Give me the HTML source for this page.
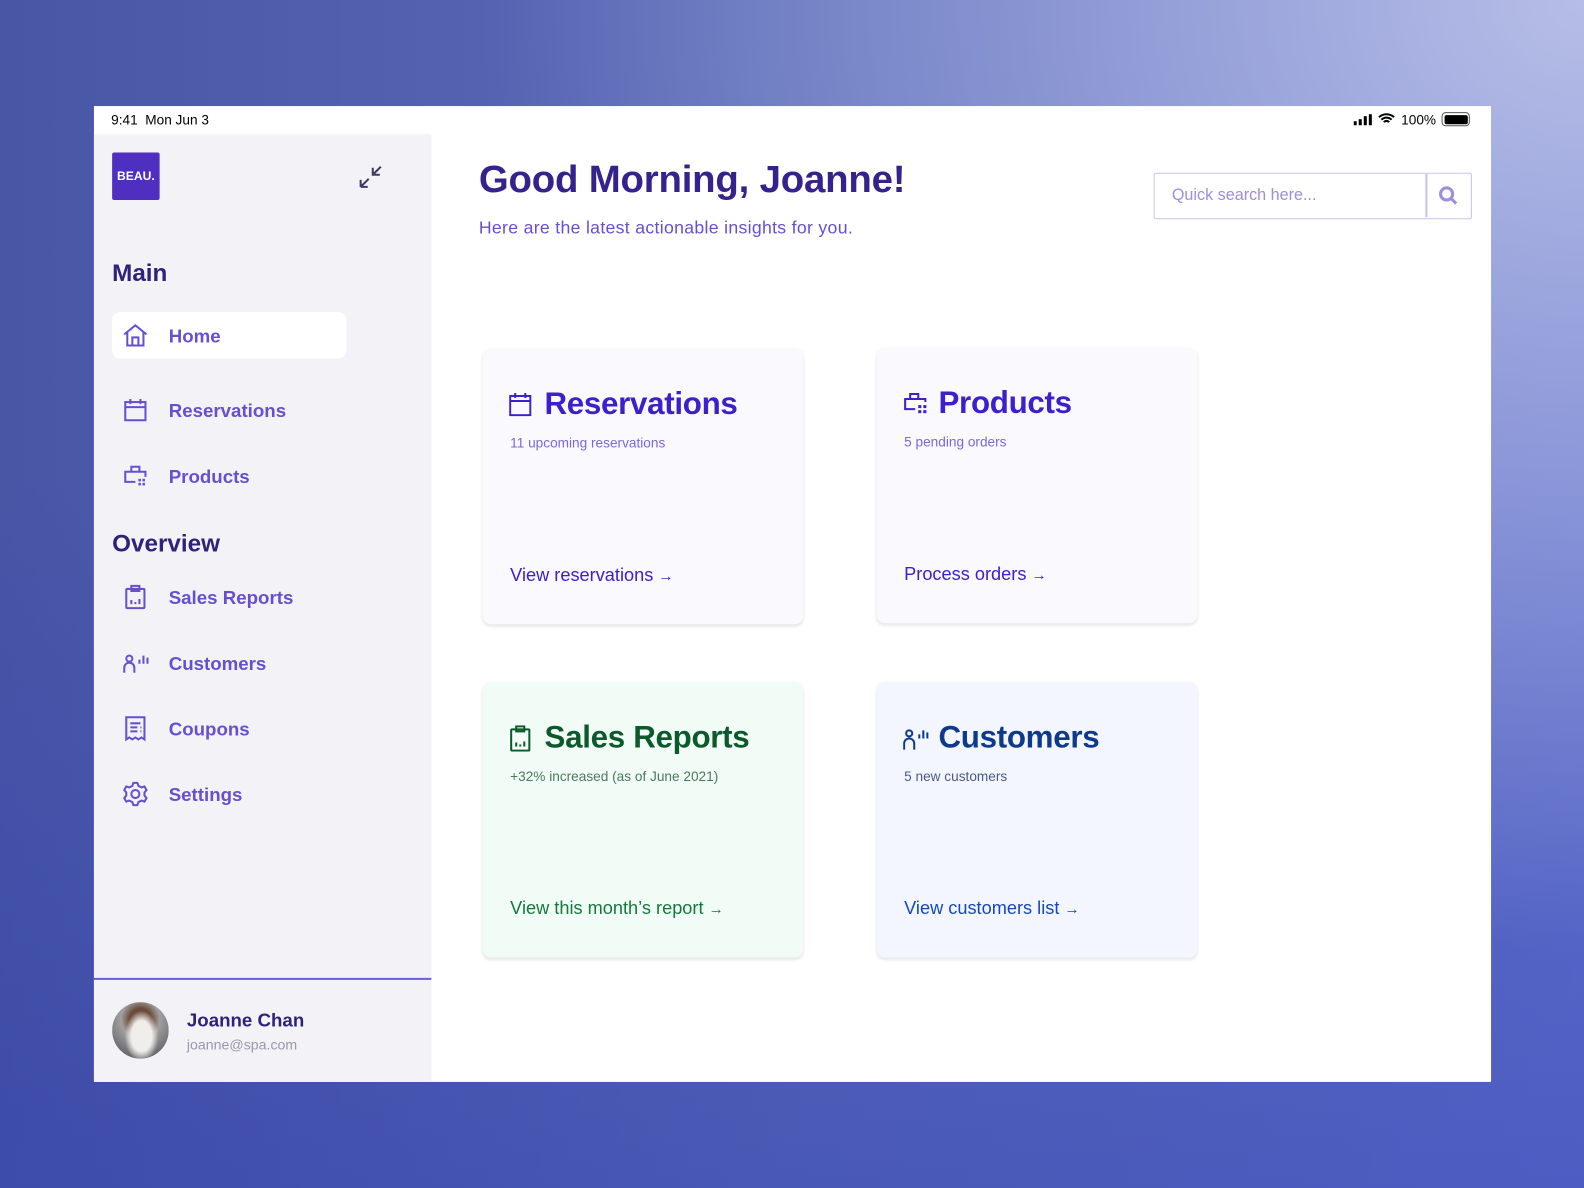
<!DOCTYPE html>
<html><head><meta charset="utf-8">
<style>
*{margin:0;padding:0;box-sizing:border-box}
html,body{width:1584px;height:1188px;overflow:hidden}
body{font-family:"Liberation Sans",sans-serif;background:#5060b0;position:relative}
#root{position:absolute;left:0;top:0;width:1568px;height:1176px;transform:scale(1.0102);transform-origin:0 0;background:radial-gradient(ellipse 70% 80% at 100% 0%,rgba(182,190,230,1) 0%,rgba(182,190,230,0) 100%),linear-gradient(to bottom,rgba(0,0,0,0) 40%,rgba(40,55,175,0.35) 100%),linear-gradient(to right,#4856a6 0%,#5a6ab8 50%,#6070cc 100%)}
.frame{position:absolute;left:93px;top:105px;width:1383px;height:966px;background:#fff}
.status{position:absolute;left:0;top:0;width:100%;height:28px;font-size:13.5px;color:#000}
.side{position:absolute;left:0;top:28px;width:334px;height:938px;background:#f2f2f7}
.logo{position:absolute;left:18px;top:18px;width:47px;height:47px;background:#4f2fc0;border-radius:2px;color:#fff;font-weight:bold;font-size:12px;line-height:47px;text-align:center}
.h{position:absolute;left:18px;font-weight:bold;color:#2e237a;font-size:24px}
.nav{position:absolute;left:18px;width:232px;height:46px;border-radius:8px;color:#6750d0;font-size:18.5px;font-weight:bold}
.nav span{position:absolute;left:56px;top:13px}
.nav svg{position:absolute;left:10px;top:10px}
.card{position:absolute;width:317px;height:273px;border-radius:8px;box-shadow:0 2px 3px rgba(0,0,0,.1)}
.card .t{position:absolute;left:61px;top:37px;font-size:31px;font-weight:bold;letter-spacing:-0.3px}
.card .s{position:absolute;left:27px;top:86px;font-size:13.5px}
.card .l{position:absolute;left:27px;top:214px;font-size:18px}
.card .l i{font-style:normal;font-size:15px}
.card svg{position:absolute;left:26px;top:43px}
</style></head><body><div id="root">
<div class="frame">
 <div class="status"><span style="position:absolute;left:17px;top:6px">9:41&nbsp; Mon Jun 3</span>
  <svg style="position:absolute;left:1247px;top:8px" width="20" height="12"><rect x="0" y="7" width="3" height="4" fill="#000"/><rect x="5" y="5" width="3" height="6" fill="#000"/><rect x="10" y="2" width="3" height="9" fill="#000"/><rect x="15" y="0" width="3" height="11" fill="#000"/></svg>
  <svg style="position:absolute;left:1271px;top:6px" width="17" height="13"><path d="M1 5a11 11 0 0 1 15 0M3.5 7.5a7 7 0 0 1 10 0M6 10a3 3 0 0 1 5 0" stroke="#000" stroke-width="2" fill="none"/></svg>
  <span style="position:absolute;left:1294px;top:6px">100%</span>
  <div style="position:absolute;left:1334px;top:6px;width:28px;height:14px;border:1.5px solid #555;border-radius:4px;padding:1.5px"><div style="background:#000;width:100%;height:100%;border-radius:2px"></div></div>
 </div>
 <div class="side">
  <div class="logo">BEAU.</div>
  <svg style="position:absolute;left:261px;top:29px" width="26" height="26" fill="none" stroke="#3d3868" stroke-width="2"><path d="M3 23l8-8M3 16v7h0M3 23h7M15 11l8-8M15 4v7h7"/></svg>
  <div class="h" style="top:124px">Main</div>
  <div class="nav" style="top:176px;background:#fff"><svg width="26" height="26" fill="none" stroke="#6750d0" stroke-width="2"><path d="M2 12L13 3l11 9M5 10v13h16V10M10 23v-8h6v8"/></svg><span>Home</span></div>
  <div class="nav" style="top:250px"><svg width="26" height="26" fill="none" stroke="#6750d0" stroke-width="2"><rect x="3" y="5" width="20" height="18"/><path d="M3 10h20M8 2v5M18 2v5"/></svg><span>Reservations</span></div>
  <div class="nav" style="top:315px"><svg width="26" height="26" fill="none" stroke="#6750d0" stroke-width="2"><path d="M13 19H3V9h20v5M9 9V4h8v5"/><rect x="16" y="16" width="2.5" height="2.5" fill="#6750d0" stroke="none"/><rect x="20" y="16" width="2.5" height="2.5" fill="#6750d0" stroke="none"/><rect x="16" y="20" width="2.5" height="2.5" fill="#6750d0" stroke="none"/><rect x="20" y="20" width="2.5" height="2.5" fill="#6750d0" stroke="none"/></svg><span>Products</span></div>
  <div class="h" style="top:392px">Overview</div>
  <div class="nav" style="top:435px"><svg width="26" height="26" fill="none" stroke="#6750d0" stroke-width="2"><rect x="4" y="5" width="18" height="19" rx="1"/><rect x="9" y="2" width="8" height="5"/><path d="M9 20v-4M13 20v-2M17 20v-5"/></svg><span>Sales Reports</span></div>
  <div class="nav" style="top:500px"><svg width="28" height="26" fill="none" stroke="#6750d0" stroke-width="2"><circle cx="7" cy="9" r="3"/><path d="M2 23v-5a5 5 0 0 1 10 0v5M17 10v4M21 6v8M25 8v6"/></svg><span>Customers</span></div>
  <div class="nav" style="top:565px"><svg width="26" height="26" fill="none" stroke="#6750d0" stroke-width="2"><path d="M4 2h18v22l-3-2-3 2-3-2-3 2-3-2-3 2z M8 8h10M8 12h7M8 16h7M18 12h1M18 16h1"/></svg><span>Coupons</span></div>
  <div class="nav" style="top:630px"><svg width="26" height="26" fill="none" stroke="#6750d0" stroke-width="2"><circle cx="13" cy="13" r="4"/><path d="M11 2h4l1 3 3 1.5 3-1 2 3.5-2 2.5v3l2 2.5-2 3.5-3-1-3 1.5-1 3h-4l-1-3-3-1.5-3 1-2-3.5 2-2.5v-3l-2-2.5 2-3.5 3 1L10 5z"/></svg><span>Settings</span></div>
  <div style="position:absolute;left:0;top:835px;width:334px;height:1.5px;background:#6a5fd8"></div>
  <div style="position:absolute;left:18px;top:859px;width:56px;height:56px;border-radius:50%;background:radial-gradient(ellipse 30% 45% at 52% 60%,#f0eeea 0 60%,rgba(240,238,234,0) 100%),radial-gradient(circle at 50% 30%,#6a4a3a 0 22%,#a0a0a0 40%,#4a4a50 100%)"></div>
  <div style="position:absolute;left:92px;top:866px;font-size:18.5px;font-weight:bold;color:#2e237a">Joanne Chan</div>
  <div style="position:absolute;left:92px;top:893px;font-size:14px;color:#9a98ac">joanne@spa.com</div>
 </div>
 <div style="position:absolute;left:381px;top:52px;font-size:38px;font-weight:bold;color:#35228c;letter-spacing:-0.2px">Good Morning, Joanne!</div>
 <div style="position:absolute;left:381px;top:110px;font-size:17.5px;color:#6750d0;letter-spacing:0.3px">Here are the latest actionable insights for you.</div>
 <div style="position:absolute;left:1049px;top:66px;width:315px;height:46px;border:1.5px solid #c9c2ee;border-radius:2px">
  <span style="position:absolute;left:17px;top:13px;font-size:16px;color:#9d8fdc">Quick search here...</span>
  <div style="position:absolute;left:268px;top:0;width:1.5px;height:43px;background:#c9c2ee"></div>
  <svg style="position:absolute;left:281px;top:12px" width="20" height="20" fill="none" stroke="#9d8fdc" stroke-width="3"><circle cx="8" cy="8" r="6"/><path d="M12.5 12.5l5 5"/></svg>
 </div>
 <div class="card" style="left:385px;top:240px;background:#f9f9fe;color:#3b20cc">
  <svg width="22" height="24" fill="none" stroke="#3b20cc" stroke-width="2"><rect x="1" y="4" width="20" height="19"/><path d="M1 9h20M6 1v5M16 1v5"/></svg>
  <div class="t">Reservations</div><div class="s" style="color:#7a68de">11 upcoming reservations</div><div class="l">View reservations <i>→</i></div></div>
 <div class="card" style="left:775px;top:239px;background:#f9f9fe;color:#3b20cc">
  <svg width="24" height="24" fill="none" stroke="#3b20cc" stroke-width="2"><path d="M12 18H2V8h20v3M7 8V3h8v5"/><rect x="15" y="14" width="3" height="3" fill="#3b20cc" stroke="none"/><rect x="20" y="14" width="3" height="3" fill="#3b20cc" stroke="none"/><rect x="15" y="19" width="3" height="3" fill="#3b20cc" stroke="none"/><rect x="20" y="19" width="3" height="3" fill="#3b20cc" stroke="none"/></svg>
  <div class="t">Products</div><div class="s" style="color:#7a68de">5 pending orders</div><div class="l">Process orders <i>→</i></div></div>
 <div class="card" style="left:385px;top:570px;background:#f2fcf6;color:#0c5a2c">
  <svg width="22" height="26" fill="none" stroke="#0c5a2c" stroke-width="2"><rect x="2" y="4" width="18" height="21" rx="1"/><rect x="7" y="1" width="8" height="5"/><path d="M7 21v-4M11 21v-2M15 21v-5"/></svg>
  <div class="t">Sales Reports</div><div class="s" style="color:#4a7a5c">+32% increased (as of June 2021)</div><div class="l" style="color:#137a3c">View this month’s report <i>→</i></div></div>
 <div class="card" style="left:775px;top:570px;background:#f3f6fe;color:#0d3a8c">
  <svg width="28" height="26" fill="none" stroke="#0d3a8c" stroke-width="2"><circle cx="6" cy="8" r="3"/><path d="M1 24v-6a5 5 0 0 1 10 0v6M16 9v4M20 5v8M24 7v6"/></svg>
  <div class="t">Customers</div><div class="s" style="color:#4a5a8c">5 new customers</div><div class="l" style="color:#1547c0">View customers list <i>→</i></div></div>
</div>
</div></body></html>
